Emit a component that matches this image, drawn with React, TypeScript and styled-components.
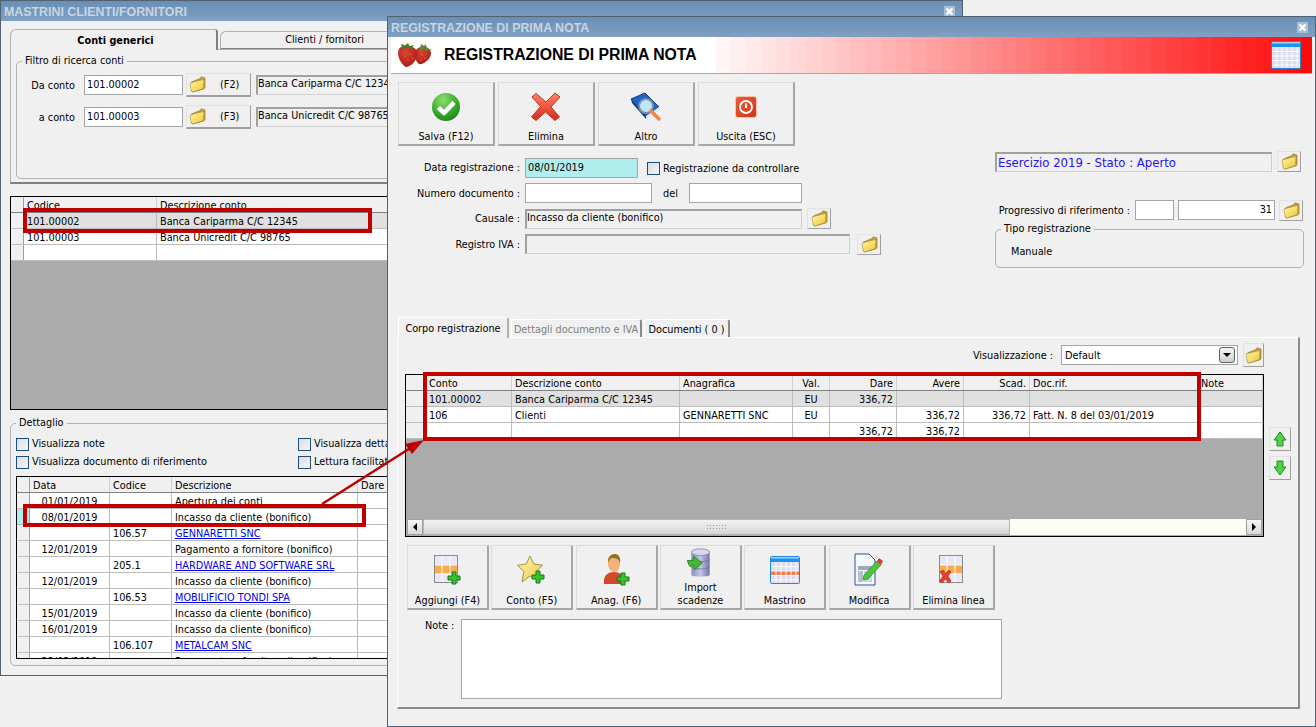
import React from 'react';
import styled, { createGlobalStyle } from 'styled-components';

const GlobalStyle = createGlobalStyle`
    * { box-sizing: border-box; }
    html, body { margin: 0; padding: 0; width: 1316px; height: 727px; overflow: hidden; background: #f0f0f0; }
    body { font-family: "DejaVu Sans Condensed", "DejaVu Sans", "Liberation Sans", sans-serif; font-stretch: condensed; font-size: 10.8px; color: #000; }
`;

// the header band fades from white to red in visible steps
const bandSteps = Array.from({ length: 40 }, (_, i) => {
    const level = Math.round(245 - (i / 39) * 235);
    return `rgb(255,${level},${level}) ${325 + i * 15}px ${325 + (i + 1) * 15}px`;
}).join(', ');

const Desktop = styled.div`
    position: relative;
    width: 1316px;
    height: 727px;
    overflow: hidden;
`;

const Window = styled.section<{ $x: number; $y: number; $w: number; $h: number }>`
    position: absolute;
    left: ${(p) => p.$x}px;
    top: ${(p) => p.$y}px;
    width: ${(p) => p.$w}px;
    height: ${(p) => p.$h}px;
    background: #f0f0f0;
    border: 1px solid #4f6172;
    display: flex;
    flex-direction: column;
    overflow: hidden;
`;

const TitleBar = styled.header`
    height: 20px;
    flex: none;
    display: flex;
    align-items: center;
    justify-content: space-between;
    padding: 1px 7px 0 3px;
    background: linear-gradient(#6a8fb5, #7fa0c3);
    color: #c8d5e2;
    font-family: "Liberation Sans", sans-serif;
    font-stretch: normal;
    font-weight: bold;
    font-size: 12.4px;
`;

const CloseButton = styled.span`
    width: 11px;
    height: 11px;
    display: flex;
    background: #a9bdd2;
`;

const Band = styled.div`
    height: 37px;
    margin: 0 3px;
    flex: none;
    display: flex;
    align-items: center;
    border-bottom: 1px solid #a8a8a8;
    padding: 0 11px 0 5px;
    background: linear-gradient(to right, #fff 0 325px, ${bandSteps});
`;

const BandTitle = styled.h1`
    margin: 0 0 0 11px;
    flex: 1;
    font-family: "Liberation Sans", sans-serif;
    font-stretch: normal;
    font-size: 15.8px;
    font-weight: bold;
`;

const Toolbar = styled.div`
    display: flex;
    gap: 3px;
    margin: 8px 0 0 10px;
`;

const BigButton = styled.button<{ $w: number; $h: number }>`
    width: ${(p) => p.$w}px;
    height: ${(p) => p.$h}px;
    flex: none;
    display: flex;
    flex-direction: column;
    align-items: center;
    justify-content: space-between;
    padding: 5px 0 1px;
    background: #f0f0f0;
    border: 1px solid #dadada;
    border-right: 2px solid #a6a6a6;
    border-bottom: 2px solid #a6a6a6;
    font: inherit;
    line-height: 13px;
    text-align: center;
`;

const ButtonIcon = styled.span<{ $lift?: number }>`
    height: 38px;
    margin-top: ${(p) => -(p.$lift ?? 0)}px;
    display: flex;
    align-items: center;
    justify-content: center;
`;

const TopSection = styled.div`
    display: flex;
    margin-top: 6px;
`;

const LeftForm = styled.div`
    width: 607px;
    padding: 5px 0 0 3px;
    display: flex;
    flex-direction: column;
    gap: 4.67px;
`;

const FormRow = styled.div`
    display: flex;
    align-items: center;
    height: 21px;
`;

const FormLabel = styled.label<{ $w?: number; $gap?: number }>`
    width: ${(p) => p.$w ?? 129}px;
    margin-right: ${(p) => p.$gap ?? 5}px;
    flex: none;
    text-align: right;
    white-space: nowrap;
`;

const Input = styled.div<{ $w: number; $tone?: string; $right?: boolean }>`
    width: ${(p) => p.$w}px;
    height: 20px;
    flex: none;
    padding: 0 2px;
    line-height: 18px;
    white-space: nowrap;
    overflow: hidden;
    text-align: ${(p) => (p.$right ? 'right' : 'left')};
    background: ${(p) => p.$tone ?? '#fff'};
    border: 1px solid #a5a5a5;
`;

const ReadOnlyField = styled.div<{ $w: number; $blue?: boolean }>`
    width: ${(p) => p.$w}px;
    height: 20px;
    flex: none;
    padding: 0 0 0 ${(p) => (p.$blue ? 1 : 0)}px;
    font-size: ${(p) => (p.$blue ? '13px' : 'inherit')};
    line-height: ${(p) => (p.$blue ? 17 : 14)}px;
    white-space: nowrap;
    overflow: hidden;
    color: ${(p) => (p.$blue ? '#2a10f0' : '#000')};
    background: #f0f0f0;
    border: 1px solid #cfcfcf;
    border-top: 2px solid #a0a0a0;
    border-left: 2px solid #a0a0a0;
`;

const DelLabel = styled.span`
    width: 37px;
    text-align: center;
`;

const FolderButton = styled.button<{ $w?: number; $h?: number; $gap?: number }>`
    width: ${(p) => p.$w ?? 24}px;
    height: ${(p) => p.$h ?? 21}px;
    margin-left: ${(p) => p.$gap ?? 0}px;
    flex: none;
    padding: 0;
    display: flex;
    align-items: center;
    justify-content: center;
    background: #f0f0f0;
    border: 1px solid #e2e2e2;
    border-right: 1px solid #a0a0a0;
    border-bottom: 1px solid #a0a0a0;
`;

const CheckLine = styled.label<{ $gap?: number; $drop?: number }>`
    display: flex;
    align-items: center;
    gap: 3px;
    margin-left: ${(p) => p.$gap ?? 0}px;
    padding-top: ${(p) => p.$drop ?? 0}px;
    line-height: 14px;
    white-space: nowrap;
`;

const CheckBox = styled.span`
    width: 13px;
    height: 13px;
    flex: none;
    border: 1px solid #1c4f7c;
    background: linear-gradient(135deg, #dcdcdc, #f6f6f6);
`;

const RightForm = styled.div`
    display: flex;
    flex-direction: column;
    margin-top: -1px;
`;

const FieldLine = styled.div`
    display: flex;
    align-items: center;
    gap: 5px;
`;

const ProgressLine = styled.div`
    display: flex;
    align-items: flex-start;
    gap: 4px;
    margin-top: 28px;
    height: 21px;
    overflow: hidden;
`;

const ProgressLabel = styled.span`
    width: 136px;
    padding: 4px 1px 0 0;
    text-align: right;
    white-space: nowrap;
`;

const GroupBox = styled.fieldset<{ $w?: number; $h?: number; $top?: number }>`
    margin: ${(p) => p.$top ?? 0}px 0 0;
    padding: 0;
    width: ${(p) => (p.$w ? `${p.$w}px` : 'auto')};
    height: ${(p) => (p.$h ? `${p.$h}px` : 'auto')};
    border: 1px solid #b2b2b2;
    border-radius: 5px;
    min-width: 0;
`;

const GroupTitle = styled.legend`
    margin-left: 5px;
    padding: 0 3px;
    line-height: 14px;
`;

const GroupText = styled.div`
    padding: 9px 0 0 15px;
`;

const TabStrip = styled.div`
    display: flex;
    align-items: flex-end;
    height: 21px;
    padding-left: 1px;
    flex: none;
`;

const SmallTab = styled.div<{ $active?: boolean; $dim?: boolean; $w: number }>`
    width: ${(p) => p.$w}px;
    height: ${(p) => (p.$active ? 21 : 18)}px;
    margin-right: 2px;
    text-align: center;
    line-height: 20px;
    white-space: nowrap;
    color: ${(p) => (p.$dim ? '#7d7d7d' : '#000')};
    background: #f0f0f0;
    border-top: 1px solid #fff;
    border-left: 1px solid #fff;
    border-right: 2px solid #8a8a8a;
    border-radius: 3px 3px 0 0;
    ${(p) => (p.$active ? 'position: relative; z-index: 1; margin-bottom: -1px; padding-top: 1px; border-right-color: #b0b0b0;' : '')}
`;

const FrontTabs = styled.div`
    margin: 48px 0 0 9px;
    width: 903px;
    display: flex;
    flex-direction: column;
`;

const TabPanel = styled.div`
    height: 372px;
    padding: 5px 0 0 7px;
    border-top: 1px solid #fff;
    border-left: 1px solid #fff;
    border-right: 2px solid #8a8a8a;
    border-bottom: 2px solid #8a8a8a;
`;

const ViewLine = styled.div`
    width: 859px;
    height: 24px;
    margin-bottom: 7px;
    display: flex;
    align-items: center;
    justify-content: flex-end;
`;

const ViewLabel = styled.span`
    margin-right: 8px;
`;

const Select = styled.div`
    width: 177px;
    height: 20px;
    margin-right: 5px;
    padding: 0 2px 0 3px;
    display: flex;
    align-items: center;
    justify-content: space-between;
    background: #fff;
    border: 1px solid #a5a5a5;
`;

const SelectArrow = styled.span`
    width: 16px;
    height: 16px;
    display: flex;
    align-items: center;
    justify-content: center;
    background: linear-gradient(#f4f4f4, #cfcfcf);
    border: 1px solid #606060;
    border-radius: 3px;
`;

const GridLine = styled.div`
    display: flex;
    gap: 5px;
`;

const DataGrid = styled.div<{ $w?: number; $h: number; $top?: number }>`
    width: ${(p) => (p.$w ? `${p.$w}px` : '100%')};
    height: ${(p) => p.$h}px;
    margin-top: ${(p) => p.$top ?? 0}px;
    flex: none;
    display: flex;
    flex-direction: column;
    overflow: hidden;
    background: #ababab;
    border: 1px solid #000;
`;

const GridRow = styled.div<{ $cols: string; $selected?: boolean; $head?: boolean }>`
    display: grid;
    grid-template-columns: ${(p) => p.$cols};
    height: 16px;
    flex: none;
    background: ${(p) => (p.$head ? '#f0f0f0' : p.$selected ? '#e0e0e0' : '#fff')};
    border-bottom: 1px solid ${(p) => (p.$head ? '#808080' : '#bdbdbd')};
`;

const GridCell = styled.div<{ $align?: string; $head?: boolean; $marker?: boolean }>`
    padding: 0 3px;
    line-height: 17px;
    white-space: nowrap;
    overflow: hidden;
    text-align: ${(p) => p.$align ?? 'left'};
    border-right: 1px solid ${(p) => (p.$head ? '#d0d0d0' : '#bdbdbd')};
    ${(p) => (p.$marker ? 'background: #f0f0f0; border-right-color: #a0a0a0;' : '')}
`;

const RowMarker = styled(GridCell) <{ $current?: boolean }>`
    background: ${(p) => (p.$current ? '#b2eeee' : '#f0f0f0')};
    border-right-color: #a0a0a0;
`;

const GridLink = styled.a`
    color: #0000ee;
    text-decoration: underline;
`;

const GrayFill = styled.div`
    flex: 1;
`;

const ScrollBar = styled.div`
    height: 16px;
    flex: none;
    display: flex;
    margin: 0 1px 1px;
    background: #fdfdf8;
`;

const ScrollEnd = styled.span`
    width: 16px;
    flex: none;
    display: flex;
    align-items: center;
    justify-content: center;
    background: linear-gradient(#f6f6f6, #d8d8d8);
    border: 1px solid #a0a0a0;
`;

const ScrollThumb = styled.span`
    width: 587px;
    flex: none;
    display: flex;
    align-items: center;
    justify-content: center;
    background: linear-gradient(#f2f2f2, #d4d6dc);
    border: 1px solid #b4b4b4;
`;

const ThumbGrip = styled.span`
    width: 22px;
    height: 6px;
    background-image: radial-gradient(#9c9c9c 40%, transparent 45%);
    background-size: 3px 3px;
`;

const MoveColumn = styled.div`
    margin-top: 53px;
    display: flex;
    flex-direction: column;
    gap: 5px;
`;

const ActionRow = styled.div`
    display: flex;
    gap: 2.34px;
    margin: 8px 0 0 2px;
`;

const NoteLine = styled.div`
    display: flex;
    margin: 9px 0 0 20px;
`;

const NoteLabel = styled.span`
    width: 36px;
`;

const NoteBox = styled.div`
    width: 541px;
    height: 80px;
    background: #fff;
    border: 1px solid #a5a5a5;
`;

const BackBody = styled.div`
    padding: 7px 9px 0;
    display: flex;
    flex-direction: column;
`;

const BackTabRow = styled.div`
    display: flex;
    align-items: flex-end;
    height: 21px;
`;

const BigTab = styled.div<{ $active?: boolean }>`
    width: ${(p) => (p.$active ? 208 : 210)}px;
    height: ${(p) => (p.$active ? 21 : 18)}px;
    margin-right: 2px;
    text-align: center;
    line-height: 16px;
    font-weight: ${(p) => (p.$active ? 'bold' : 'normal')};
    background: #f0f0f0;
    border: 1px solid #b0b0b0;
    border-bottom: none;
    border-right: 2px solid #808080;
    border-radius: 6px 3px 0 0;
    padding: ${(p) => (p.$active ? '3px 0 0 4px' : '0')};
    ${(p) => (p.$active ? 'margin-bottom: -1px; position: relative; z-index: 1;' : 'border-bottom: 1px solid #808080;')}
`;

const BackPanel = styled.div`
    height: 135px;
    padding: 4px 5px 0;
    border-top: 1px solid #b0b0b0;
    border-left: 1px solid #b0b0b0;
    border-right: 2px solid #808080;
    border-bottom: 2px solid #808080;
`;

const FilterRow = styled.div`
    display: flex;
    align-items: center;
    height: 24px;
    margin: 0 0 8px 0;
`;

const FilterButton = styled.button`
    width: 65px;
    height: 24px;
    margin: 0 5px 0 3px;
    flex: none;
    display: flex;
    align-items: center;
    gap: 14px;
    padding: 0 0 0 2px;
    font: inherit;
    background: #f0f0f0;
    border: 1px solid #e2e2e2;
    border-right: 1px solid #a0a0a0;
    border-bottom: 2px solid #a0a0a0;
`;

const FilterGroupBody = styled.div`
    padding-top: 5px;
`;

const CheckGrid = styled.div`
    display: grid;
    grid-template-columns: 282px 1fr;
    row-gap: 4px;
    padding: 7px 0 7px 5px;
`;

const GridInset = styled.div`
    padding: 0 5px;
`;

const Highlight = styled.div<{ $x: number; $y: number; $w: number; $h: number }>`
    position: absolute;
    left: ${(p) => p.$x}px;
    top: ${(p) => p.$y}px;
    width: ${(p) => p.$w}px;
    height: ${(p) => p.$h}px;
    border: 4px solid #c00000;
    z-index: 5;
`;

const ArrowLayer = styled.svg`
    position: absolute;
    inset: 0;
    z-index: 6;
`;

const CloseIcon = () => (
    <svg width="11" height="11" viewBox="0 0 11 11">
        <path d="M2.5 2.5 8.5 8.5M8.5 2.5 2.5 8.5" stroke="#fff" strokeWidth="2.4" />
    </svg>
);

const FolderIcon = () => (
    <svg width="17" height="17" viewBox="0 0 17 17">
        <defs>
            <linearGradient id="folderFill" x1="0" y1="0" x2="1" y2="1">
                <stop offset="0" stopColor="#fff8b0" />
                <stop offset="1" stopColor="#ecc42e" />
            </linearGradient>
        </defs>
        <path d="M2.500 6 11 2.500 12 .8 16 2 16 12 14.500 13 4 16 2.500 15Z" fill="#c9a232" stroke="#8f7a3c" strokeWidth=".7" />
        <path d="M1 7 12 4 15 3.500 14.500 12.500 4 16 2.300 15.300Z" fill="url(#folderFill)" stroke="#a58a38" strokeWidth=".6" />
    </svg>
);

const StrawberryIcon = () => (
    <svg width="37" height="26" viewBox="0 0 37 26">
        <defs>
            <radialGradient id="berryFill" cx=".4" cy=".3" r=".8">
                <stop offset="0" stopColor="#d8452f" />
                <stop offset=".7" stopColor="#b8241c" />
                <stop offset="1" stopColor="#8a1a14" />
            </radialGradient>
        </defs>
        <path d="M22 6C29 3 35 6 35 12 34 18 27 23 23 22 19 20 17 9 22 6Z" fill="url(#berryFill)" />
        <path d="M5 5C12 2 22 5 21.500 13 20 20 14 25 10 25 5 23-2 10 5 5Z" fill="url(#berryFill)" />
        <path d="M6 5 5 1.500 9 3.500 12 1 13.500 4 18 3 15 7 11 5 7 8Z" fill="#4a7a28" />
        <path d="M24 6 25 2 28 4 30 2 30.500 6 36 8 31 9 27 7 24 9Z" fill="#5c8a30" />
        <g fill="#e8a070">
            <circle cx="9" cy="14" r=".6" /><circle cx="14" cy="12" r=".6" /><circle cx="12" cy="18" r=".6" /><circle cx="17" cy="16" r=".6" />
            <circle cx="26" cy="13" r=".6" /><circle cx="30" cy="12" r=".6" /><circle cx="25" cy="18" r=".6" /><circle cx="29" cy="16" r=".6" />
        </g>
    </svg>
);

const CheckIcon = () => (
    <svg width="30" height="30" viewBox="0 0 30 30">
        <defs>
            <radialGradient id="okFill" cx=".4" cy=".25" r=".85">
                <stop offset="0" stopColor="#8fe070" />
                <stop offset=".6" stopColor="#36a828" />
                <stop offset="1" stopColor="#177a1a" />
            </radialGradient>
        </defs>
        <circle cx="15" cy="15" r="14" fill="url(#okFill)" />
        <path d="M7.5 15.5 13 21 23 10.5" fill="none" stroke="#fff" strokeWidth="4.5" strokeLinejoin="round" />
    </svg>
);

const CrossIcon = () => (
    <svg width="30" height="30" viewBox="0 0 30 30">
        <defs>
            <linearGradient id="crossFill" x1="0" y1="0" x2="0" y2="1">
                <stop offset="0" stopColor="#ff8468" />
                <stop offset="1" stopColor="#d9281c" />
            </linearGradient>
        </defs>
        <path d="M5 1.5 15 10 24 1 29 5 20 15 28.500 25 24 28.500 14.500 20 5 28.500 .5 25 9.500 14.500 1 5Z" fill="url(#crossFill)" stroke="#c4301f" strokeLinejoin="round" />
    </svg>
);

const BookSearchIcon = () => (
    <svg width="32" height="30" viewBox="0 0 32 30">
        <path d="M1 7 15 1 29 15 16 24Z" fill="#1f63c4" stroke="#123f8a" />
        <path d="M1 7 2 11 16 27 16 24Z" fill="#0d3f96" />
        <path d="M16 24 29 15 30 18 16 27Z" fill="#dfe8f4" />
        <circle cx="16" cy="14" r="7" fill="#bfe6f6" stroke="#7c8ea2" strokeWidth="2" />
        <path d="M21 19 29 27" stroke="#e88a4a" strokeWidth="3.500" strokeLinecap="round" />
    </svg>
);

const PowerIcon = () => (
    <svg width="24" height="24" viewBox="0 0 24 24">
        <defs>
            <linearGradient id="powerFill" x1="0" y1="0" x2="1" y2="1">
                <stop offset="0" stopColor="#ee5a36" />
                <stop offset="1" stopColor="#cf3518" />
            </linearGradient>
        </defs>
        <rect x="1.500" y="1.500" width="21" height="21" rx="2.500" fill="url(#powerFill)" stroke="#f4c4b4" />
        <circle cx="12" cy="12" r="6" fill="none" stroke="#fff" strokeWidth="1.800" />
        <path d="M12 8.500V13" stroke="#fff" strokeWidth="2.200" />
    </svg>
);

const CalendarIcon = ({ row }: { row?: boolean }) => (
    <svg width="30" height="28" viewBox="0 0 30 28">
        <rect x=".5" y=".5" width="29" height="27" rx="1" fill="#dcdcf0" stroke="#1e88e0" />
        <rect x="1" y="1" width="28" height="5" fill="#1e90f0" />
        <rect x="1" y="1" width="28" height="1.500" fill="#9cd2fa" />
        {row && <rect x="1" y="15" width="28" height="5" fill="#f57a50" />}
        <path d="M1 10.500H29M1 15H29M1 19.500H29M1 24H29M6 6V27M11 6V27M16 6V27M21 6V27M26 6V27" stroke="#fff" strokeWidth=".9" />
    </svg>
);

const TableBase = () => (
    <>
        <rect x=".5" y=".5" width="23" height="27" fill="#e6e8f6" stroke="#8c8c8c" />
        <rect x="1" y="10" width="22" height="9" fill="#f9ad4a" />
        <path d="M8 1V27M16 1V27M1 10H23M1 19H23" stroke="#fff" strokeWidth="1" />
    </>
);

const PlusMark = ({ x, y }: { x: number; y: number }) => (
    <path
        transform={`translate(${x} ${y})`}
        d="M4 0H8V4H12V8H8V12H4V8H0V4H4Z"
        fill="#35c22d"
        stroke="#167a18"
        strokeWidth="1"
    />
);

const GridPlusIcon = () => (
    <svg width="28" height="30" viewBox="0 0 28 30">
        <TableBase />
        <PlusMark x={14} y={17} />
    </svg>
);

const GridCrossIcon = () => (
    <svg width="28" height="30" viewBox="0 0 28 30">
        <TableBase />
        <path d="M1 17 4 15 6.500 18.500 10 15 12 17 9 21 12 26 9.500 28 6.500 24 3 28 .5 26 4 21Z" fill="#e6402a" stroke="#a82818" strokeWidth=".6" />
    </svg>
);

const StarPlusIcon = () => (
    <svg width="30" height="30" viewBox="0 0 30 30">
        <defs>
            <linearGradient id="starFill" x1="0" y1="0" x2="1" y2="1">
                <stop offset="0" stopColor="#fff6b8" />
                <stop offset="1" stopColor="#f0c83a" />
            </linearGradient>
        </defs>
        <path d="M13 1 16.800 9 25.500 10.300 19.200 16.500 20.700 25.200 13 21 5 27 6.800 16.500 .5 10.300 9.200 9Z" fill="url(#starFill)" stroke="#a89040" />
        <PlusMark x={15} y={16} />
    </svg>
);

const PersonPlusIcon = () => (
    <svg width="30" height="32" viewBox="0 0 30 32">
        <path d="M3 30C2 22 6 18 13 18 20 18 23 22 23 30Z" fill="#d2492a" />
        <ellipse cx="13" cy="10" rx="6" ry="8" fill="#f4b07a" />
        <path d="M7 9C6 2 11 0 14 0 18 0 20 4 19 9 18 5 15 4 12 4 9 4 8 6 7 9Z" fill="#92701c" />
        <PlusMark x={16} y={19} />
    </svg>
);

const DatabaseIcon = () => (
    <svg width="27" height="30" viewBox="0 0 32 36">
        <defs>
            <linearGradient id="dbFill" x1="0" y1="0" x2="1" y2="0">
                <stop offset="0" stopColor="#8c8cc4" />
                <stop offset=".5" stopColor="#c4c4e4" />
                <stop offset="1" stopColor="#7474a8" />
            </linearGradient>
        </defs>
        <path d="M5 5V32C5 35 27 35 27 32V5Z" fill="url(#dbFill)" />
        <ellipse cx="16" cy="5" rx="11" ry="4" fill="#d8d8f0" stroke="#8484b8" />
        <path d="M5 14C8 17 24 17 27 14M5 23C8 26 24 26 27 23" fill="none" stroke="#6c6ca0" />
        <path d="M0 15 7 15 8 10 18 18 9 26 8 21 3 22Z" fill="#45b82e" stroke="#1f8020" />
    </svg>
);

const EditDocIcon = () => (
    <svg width="30" height="34" viewBox="0 0 30 34">
        <path d="M1 1H15L21 7V32H1Z" fill="#f6f8fc" stroke="#30508c" />
        <rect x="4" y="13" width="14" height="4" fill="#9caabc" />
        <rect x="4" y="18" width="5" height="11" fill="#b4c0d0" />
        <rect x="10" y="18" width="8" height="11" fill="#cdd6e2" />
        <path d="M9 27 10 22 23 8 27 12 14 26Z" fill="#4cc43c" stroke="#26862a" strokeWidth=".7" />
        <path d="M23 8 25 5 29 8 27 12Z" fill="#e0383a" />
    </svg>
);

const MoveIcon = ({ down }: { down?: boolean }) => (
    <svg width="14" height="16" viewBox="0 0 14 16">
        <path
            d={down ? 'M4 1H10V7H13L7 15 1 7H4Z' : 'M7 1 13 9H10V15H4V9H1Z'}
            fill="#54d046"
            stroke="#1c8c2a"
        />
    </svg>
);

const Caret = ({ right }: { right?: boolean }) => (
    <svg width="6" height="8" viewBox="0 0 6 8">
        <path d={right ? 'M1 0 5 4 1 8Z' : 'M5 0 1 4 5 8Z'} fill="#000" />
    </svg>
);

const CaretDown = () => (
    <svg width="8" height="6" viewBox="0 0 8 6">
        <path d="M0 1H8L4 5Z" fill="#000" />
    </svg>
);

const accountCols = '13px 133px 300px 1fr';
const detailCols = '13px 80px 62px 186px 72px 1fr';
const entryCols = '20px 86px 168px 113px 37px 67px 67px 66px 168px 1fr';

type Movement = { date?: string; code?: string; text: string; link?: boolean; current?: boolean };

const movements: Movement[] = [
    { date: '01/01/2019', text: 'Apertura dei conti' },
    { date: '08/01/2019', text: 'Incasso da cliente (bonifico)', current: true },
    { code: '106.57', text: 'GENNARETTI SNC', link: true },
    { date: '12/01/2019', text: 'Pagamento a fornitore (bonifico)' },
    { code: '205.1', text: 'HARDWARE AND SOFTWARE SRL', link: true },
    { date: '12/01/2019', text: 'Incasso da cliente (bonifico)' },
    { code: '106.53', text: 'MOBILIFICIO TONDI SPA', link: true },
    { date: '15/01/2019', text: 'Incasso da cliente (bonifico)' },
    { date: '16/01/2019', text: 'Incasso da cliente (bonifico)' },
    { code: '106.107', text: 'METALCAM SNC', link: true },
    { date: '22/02/2019', text: 'Pagamento a fornitore (bonifico)' },
];

const entryHead: [string, string?][] = [
    ['Conto'], ['Descrizione conto'], ['Anagrafica'], ['Val.', 'center'],
    ['Dare', 'right'], ['Avere', 'right'], ['Scad.', 'right'], ['Doc.rif.'], ['Note'],
];

const entries: string[][] = [
    ['101.00002', 'Banca Cariparma C/C 12345', '', 'EU', '336,72', '', '', '', ''],
    ['106', 'Clienti', 'GENNARETTI SNC', 'EU', '', '336,72', '336,72', 'Fatt. N. 8 del 03/01/2019', ''],
    ['', '', '', '', '336,72', '336,72', '', '', ''],
];

const actions: { label: React.ReactNode; icon: React.ReactNode; lift?: number }[] = [
    { label: 'Aggiungi (F4)', icon: <GridPlusIcon /> },
    { label: 'Conto (F5)', icon: <StarPlusIcon /> },
    { label: 'Anag. (F6)', icon: <PersonPlusIcon /> },
    { label: <>Import<br />scadenze</>, icon: <DatabaseIcon />, lift: 7 },
    { label: 'Mastrino', icon: <CalendarIcon row /> },
    { label: 'Modifica', icon: <EditDocIcon /> },
    { label: 'Elimina linea', icon: <GridCrossIcon /> },
];

const BackWindow = () => (
    <Window $x={0} $y={0} $w={963} $h={676}>
        <TitleBar>
            MASTRINI CLIENTI/FORNITORI
            <CloseButton><CloseIcon /></CloseButton>
        </TitleBar>
        <BackBody>
            <BackTabRow>
                <BigTab $active>Conti generici</BigTab>
                <BigTab>Clienti / fornitori</BigTab>
            </BackTabRow>
            <BackPanel>
                <GroupBox $h={125}>
                    <GroupTitle>Filtro di ricerca conti</GroupTitle>
                    <FilterGroupBody>
                        <FilterRow>
                            <FormLabel $w={58} $gap={9}>Da conto</FormLabel>
                            <Input $w={99}>101.00002</Input>
                            <FilterButton><FolderIcon />(F2)</FilterButton>
                            <ReadOnlyField $w={300}>Banca Cariparma C/C 12345</ReadOnlyField>
                        </FilterRow>
                        <FilterRow>
                            <FormLabel $w={58} $gap={9}>a conto</FormLabel>
                            <Input $w={99}>101.00003</Input>
                            <FilterButton><FolderIcon />(F3)</FilterButton>
                            <ReadOnlyField $w={300}>Banca Unicredit C/C 98765</ReadOnlyField>
                        </FilterRow>
                    </FilterGroupBody>
                </GroupBox>
            </BackPanel>
            <DataGrid $h={214} $top={12}>
                <GridRow $cols={accountCols} $head>
                    <GridCell $head $marker />
                    <GridCell $head>Codice</GridCell>
                    <GridCell $head>Descrizione conto</GridCell>
                    <GridCell $head />
                </GridRow>
                <GridRow $cols={accountCols} $selected>
                    <RowMarker /><GridCell>101.00002</GridCell><GridCell>Banca Cariparma C/C 12345</GridCell><GridCell />
                </GridRow>
                <GridRow $cols={accountCols}>
                    <RowMarker /><GridCell>101.00003</GridCell><GridCell>Banca Unicredit C/C 98765</GridCell><GridCell />
                </GridRow>
                <GridRow $cols={accountCols}>
                    <RowMarker /><GridCell /><GridCell /><GridCell />
                </GridRow>
                <GrayFill />
            </DataGrid>
            <GroupBox $h={250} $top={6}>
                <GroupTitle>Dettaglio</GroupTitle>
                <CheckGrid>
                    <CheckLine><CheckBox />Visualizza note</CheckLine>
                    <CheckLine><CheckBox />Visualizza dettagli</CheckLine>
                    <CheckLine><CheckBox />Visualizza documento di riferimento</CheckLine>
                    <CheckLine><CheckBox />Lettura facilitata</CheckLine>
                </CheckGrid>
                <GridInset>
                    <DataGrid $h={183}>
                        <GridRow $cols={detailCols} $head>
                            <GridCell $head $marker />
                            <GridCell $head>Data</GridCell>
                            <GridCell $head>Codice</GridCell>
                            <GridCell $head>Descrizione</GridCell>
                            <GridCell $head>Dare</GridCell>
                            <GridCell $head />
                        </GridRow>
                        {movements.map((m, idx) => (
                            <GridRow $cols={detailCols} key={`Movement${idx}`}>
                                <RowMarker $current={m.current} />
                                <GridCell $align="center">{m.date}</GridCell>
                                <GridCell>{m.code}</GridCell>
                                <GridCell>{m.link ? <GridLink>{m.text}</GridLink> : m.text}</GridCell>
                                <GridCell />
                                <GridCell />
                            </GridRow>
                        ))}
                    </DataGrid>
                </GridInset>
            </GroupBox>
        </BackBody>
    </Window>
);

const FrontWindow = () => (
    <Window $x={387} $y={16} $w={929} $h={711}>
        <TitleBar>
            REGISTRAZIONE DI PRIMA NOTA
            <CloseButton><CloseIcon /></CloseButton>
        </TitleBar>
        <Band>
            <StrawberryIcon />
            <BandTitle>REGISTRAZIONE DI PRIMA NOTA</BandTitle>
            <CalendarIcon />
        </Band>
        <Toolbar>
            <BigButton $w={97} $h={64}><ButtonIcon><CheckIcon /></ButtonIcon>Salva (F12)</BigButton>
            <BigButton $w={97} $h={64}><ButtonIcon><CrossIcon /></ButtonIcon>Elimina</BigButton>
            <BigButton $w={97} $h={64}><ButtonIcon><BookSearchIcon /></ButtonIcon>Altro</BigButton>
            <BigButton $w={97} $h={64}><ButtonIcon><PowerIcon /></ButtonIcon>Uscita (ESC)</BigButton>
        </Toolbar>
        <TopSection>
            <LeftForm>
                <FormRow>
                    <FormLabel>Data registrazione :</FormLabel>
                    <Input $w={113} $tone="#b0eeee">08/01/2019</Input>
                    <CheckLine $gap={9} $drop={2}><CheckBox />Registrazione da controllare</CheckLine>
                </FormRow>
                <FormRow>
                    <FormLabel>Numero documento :</FormLabel>
                    <Input $w={127} />
                    <DelLabel>del</DelLabel>
                    <Input $w={113} />
                </FormRow>
                <FormRow>
                    <FormLabel>Causale :</FormLabel>
                    <ReadOnlyField $w={277}>Incasso da cliente (bonifico)</ReadOnlyField>
                    <FolderButton $gap={5}><FolderIcon /></FolderButton>
                </FormRow>
                <FormRow>
                    <FormLabel>Registro IVA :</FormLabel>
                    <ReadOnlyField $w={325} />
                    <FolderButton $gap={7}><FolderIcon /></FolderButton>
                </FormRow>
            </LeftForm>
            <RightForm>
                <FieldLine>
                    <ReadOnlyField $w={277} $blue>Esercizio 2019 - Stato : Aperto</ReadOnlyField>
                    <FolderButton><FolderIcon /></FolderButton>
                </FieldLine>
                <ProgressLine>
                    <ProgressLabel>Progressivo di riferimento :</ProgressLabel>
                    <Input $w={39} />
                    <Input $w={97} $right>31</Input>
                    <FolderButton><FolderIcon /></FolderButton>
                </ProgressLine>
                <GroupBox $w={309} $h={46} $top={1}>
                    <GroupTitle>Tipo registrazione</GroupTitle>
                    <GroupText>Manuale</GroupText>
                </GroupBox>
            </RightForm>
        </TopSection>
        <FrontTabs>
            <TabStrip>
                <SmallTab $active $w={111}>Corpo registrazione</SmallTab>
                <SmallTab $dim $w={131}>Dettagli documento e IVA</SmallTab>
                <SmallTab $w={86}>Documenti ( 0 )</SmallTab>
            </TabStrip>
            <TabPanel>
                <ViewLine>
                    <ViewLabel>Visualizzazione :</ViewLabel>
                    <Select>Default<SelectArrow><CaretDown /></SelectArrow></Select>
                    <FolderButton $w={21} $h={24}><FolderIcon /></FolderButton>
                </ViewLine>
                <GridLine>
                    <DataGrid $w={859} $h={163}>
                        <GridRow $cols={entryCols} $head>
                            <GridCell $head $marker />
                            {entryHead.map(([title, align]) => (
                                <GridCell $head $align={align} key={title}>{title}</GridCell>
                            ))}
                        </GridRow>
                        {entries.map((row, idx) => (
                            <GridRow $cols={entryCols} $selected={idx === 0} key={`Entry${idx}`}>
                                <RowMarker />
                                {row.map((value, col) => (
                                    <GridCell $align={entryHead[col][1]} key={col}>{value}</GridCell>
                                ))}
                            </GridRow>
                        ))}
                        <GrayFill />
                        <ScrollBar>
                            <ScrollEnd><Caret /></ScrollEnd>
                            <ScrollThumb><ThumbGrip /></ScrollThumb>
                            <GrayFill />
                            <ScrollEnd><Caret right /></ScrollEnd>
                        </ScrollBar>
                    </DataGrid>
                    <MoveColumn>
                        <FolderButton $w={22} $h={24}><MoveIcon /></FolderButton>
                        <FolderButton $w={22} $h={24}><MoveIcon down /></FolderButton>
                    </MoveColumn>
                </GridLine>
                <ActionRow>
                    {actions.map((action, idx) => (
                        <BigButton $w={82} $h={65} key={`Action${idx}`}>
                            <ButtonIcon $lift={action.lift}>{action.icon}</ButtonIcon>
                            <span>{action.label}</span>
                        </BigButton>
                    ))}
                </ActionRow>
                <NoteLine>
                    <NoteLabel>Note :</NoteLabel>
                    <NoteBox />
                </NoteLine>
            </TabPanel>
        </FrontTabs>
    </Window>
);

export default function App() {
    return (
        <Desktop>
            <GlobalStyle />
            <BackWindow />
            <FrontWindow />
            <Highlight $x={23} $y={208} $w={349} $h={25} />
            <Highlight $x={23} $y={504} $w={343} $h={23} />
            <Highlight $x={423} $y={372} $w={778} $h={69} />
            <ArrowLayer width="1316" height="727" viewBox="0 0 1316 727">
                <path d="M322 504 412 447" stroke="#c00000" strokeWidth="2.500" />
                <path d="M424 440 405 444 412 454Z" fill="#c00000" />
            </ArrowLayer>
        </Desktop>
    );
}
